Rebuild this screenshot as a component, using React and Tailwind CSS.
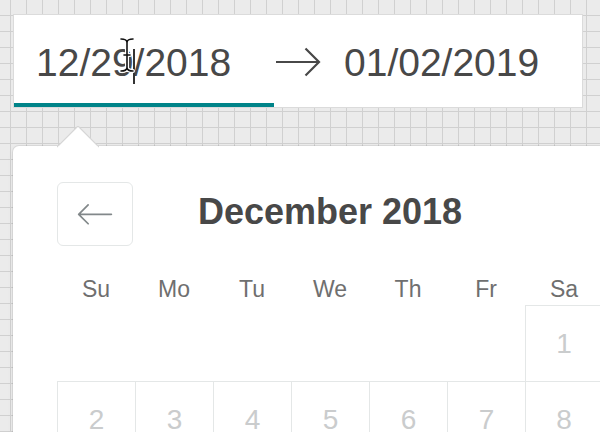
import React from "react";

const LeftArrow = () => (
  <svg width="38" height="38" viewBox="0 0 1000 1000" className="fill-[#82888a]">
    <path d="M336 275L126 485h806c13 0 23 10 23 23s-10 23-23 23H126l210 210c11 11 11 21 0 32-5 5-10 7-16 7s-11-2-16-7L55 524c-11-11-11-21 0-32l249-249c21-22 53 10 32 32z" />
  </svg>
);

const RightArrow = () => (
  <svg width="48" height="48" viewBox="0 0 48 48" fill="none">
    <path d="M2 25H45" stroke="#484848" strokeWidth="2.2" />
    <path d="M31.5 11.5L45 25L31.5 38.5" stroke="#484848" strokeWidth="2.2" />
  </svg>
);

const IBeam = () => (
  <svg width="18" height="36" viewBox="0 0 18 36" fill="none" className="absolute left-[104px] top-[22px]">
    <g stroke="#fff" strokeWidth="4" strokeLinecap="round">
      <path d="M3 2C6 2 8.5 2.5 9 5C9.5 2.5 12 2 15 2" />
      <path d="M9 5V31" />
      <path d="M3 34C6 34 8.5 33.5 9 31C9.5 33.5 12 34 15 34" />
      <path d="M6 18H12" />
    </g>
    <g stroke="#111" strokeWidth="1.6" strokeLinecap="round">
      <path d="M3 2C6 2 8.5 2.5 9 5C9.5 2.5 12 2 15 2" />
      <path d="M9 5V31" />
      <path d="M3 34C6 34 8.5 33.5 9 31C9.5 33.5 12 34 15 34" />
      <path d="M6 18H12" />
    </g>
  </svg>
);

const weekdays = ["Su", "Mo", "Tu", "We", "Th", "Fr", "Sa"];

const cellBase = "h-[76px] border-t border-l border-[#e4e7e7] flex items-center justify-center text-[28px] text-[#cacccd]";
const cellLast = "h-[76px] border-t border-l border-r border-[#e4e7e7] flex items-center justify-center text-[28px] text-[#cacccd]";

export default function App() {
  const row1 = [null, null, null, null, null, null, 1];
  const row2 = [2, 3, 4, 5, 6, 7, 8];
  return (
    <div className="w-[600px] h-[432px] overflow-hidden bg-[#ebebeb] bg-[linear-gradient(to_right,#d0d0d0_1px,transparent_1px),linear-gradient(to_bottom,#d0d0d0_1px,transparent_1px)] bg-[length:16px_16px] bg-[position:10px_15px] pl-[13px] pt-[14px] font-['Liberation_Sans',Arial,sans-serif]">
      {/* Inputs */}
      <div className="w-[570px] h-[94px] bg-white border border-[#dbdbdb] flex items-start">
        <div className="relative w-[260px] h-[92px] pl-[22px] pt-[24px] pb-[16px] border-b-4 border-[#008489] text-[39px] leading-[48px] text-[#484848]">
          12/29/2018
          <span className="absolute left-[119px] top-[34px] w-[2px] h-[35px] bg-[#333]" />
          <IBeam />
        </div>
        <div className="w-[48px] h-[92px] flex items-center">
          <RightArrow />
        </div>
        <div className="w-[260px] h-[92px] pl-[22px] pt-[24px] pb-[16px] border-b-4 border-transparent text-[39px] leading-[48px] text-[#484848]">
          01/02/2019
        </div>
      </div>

      {/* Popup */}
      <div className="relative mt-[38px] w-[640px] h-[400px] bg-white rounded-[6px] shadow-[0_0_0_1px_rgba(0,0,0,0.07),0_2px_6px_rgba(0,0,0,0.05)] pl-[44px] pt-[36px]">
        <svg width="42" height="22" viewBox="0 0 42 22" className="absolute left-[44px] top-[-20px]">
          <path d="M0 21L21 0L42 21" fill="#fff" stroke="#d6d6d6" strokeWidth="1.2" />
          <path d="M1 22H41" stroke="#fff" strokeWidth="3" />
        </svg>
        <div className="w-[546px]">
          <div className="grid grid-cols-[76px_1fr_76px] items-center h-[64px]">
            <button className="w-[76px] h-[64px] border border-[#e4e7e7] rounded-[6px] bg-white flex items-center justify-center">
              <LeftArrow />
            </button>
            <div className="text-center text-[36px] font-bold text-[#484848] leading-[60px] pb-[4px]">
              December 2018
            </div>
            <div />
          </div>
          <div className="mt-[28px] grid grid-cols-7 h-[30px] items-center">
            {weekdays.map((d) => (
              <div key={d} className="text-center text-[23px] leading-[30px] text-[#6f6f6f]">
                {d}
              </div>
            ))}
          </div>
          <div className="mt-[1px] grid grid-cols-7">
            {row1.map((n, i) =>
              n === null ? (
                <div key={"a" + i} className="h-[76px]" />
              ) : (
                <div key={"a" + i} className={cellLast}>
                  {n}
                </div>
              )
            )}
            {row2.map((n, i) => (
              <div key={"b" + i} className={i === 6 ? cellLast : cellBase}>
                {n}
              </div>
            ))}
          </div>
        </div>
      </div>
    </div>
  );
}
